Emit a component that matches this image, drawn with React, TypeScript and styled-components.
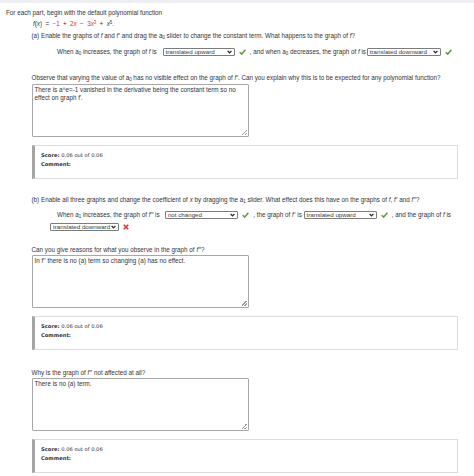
import React from 'react';
import styled, { createGlobalStyle } from 'styled-components';

const GlobalStyle = createGlobalStyle`
  html, body {
    margin: 0;
    padding: 0;
    background: #fff;
  }
  body {
    font-family: "Liberation Sans", Arial, sans-serif;
    font-size: 6.3px;
    color: #333;
  }
  sub, sup {
    font-size: 70%;
    line-height: 0;
    vertical-align: baseline;
    position: relative;
  }
  sub { top: 0.3em; }
  sup { top: -0.45em; }
`;

const TopBar = styled.div`
  height: 3px;
  background: #eceef1;
`;

const Page = styled.div`
  padding: 1px 0 0 6px;
`;

const Intro = styled.p`
  margin: 5px 0 0;
  line-height: 8px;
  white-space: nowrap;
`;

const Part = styled.section`
  margin-left: 25.5px;
`;

const Formula = styled.p`
  margin: 3px 0 0 1.5px;
  line-height: 8px;
  white-space: nowrap;
  word-spacing: 1.6px;
`;

const Coef = styled.span`
  color: #d9302c;
`;

const Question = styled.p<{ $top: number }>`
  margin: ${(p) => p.$top}px 0 0;
  line-height: 8px;
  white-space: nowrap;
`;

const AnswerRow = styled.div<{ $top: number }>`
  margin: ${(p) => p.$top}px 0 0 18.5px;
  width: 412px;
  line-height: 12px;
  text-indent: 7px;
  white-space: nowrap;
`;

const Select = styled.span<{ $w: number; $ml: number }>`
  display: inline-flex;
  align-items: center;
  justify-content: space-between;
  box-sizing: border-box;
  width: ${(p) => p.$w}px;
  height: 8px;
  margin-left: ${(p) => p.$ml}px;
  padding: 0 2px 0 2px;
  border: 1px solid #7d7d7d;
  border-radius: 1px;
  font-size: 6.2px;
  line-height: 6px;
  text-indent: 0;
  vertical-align: middle;
  color: #3a3a3a;
  overflow: hidden;
`;

const Mark = styled.svg`
  vertical-align: middle;
  margin: 0 2.5px 0 4px;
`;

const Answer = styled.textarea<{ $top: number }>`
  display: block;
  box-sizing: border-box;
  width: 217px;
  height: 53px;
  margin-top: ${(p) => p.$top}px;
  padding: 1px 2px;
  border: 1px solid #a8a8a8;
  border-radius: 1px;
  font: 6.3px/8px "Liberation Sans", Arial, sans-serif;
  color: #333;
  resize: none;
  outline: none;
  background: linear-gradient(
      135deg,
      transparent 40%,
      #9a9a9a 40%,
      #9a9a9a 52%,
      transparent 52%,
      transparent 70%,
      #9a9a9a 70%,
      #9a9a9a 82%,
      transparent 82%
    )
    no-repeat right 1px bottom 1px / 5px 5px;
`;

const ScoreBox = styled.div`
  box-sizing: border-box;
  width: 426px;
  height: 34px;
  margin-top: 8px;
  padding: 5px 6.5px;
  border: 1px solid #dcdcdc;
  border-left: 3px solid #a5a5a5;
  font-family: "DejaVu Sans", Verdana, sans-serif;
  font-size: 5.2px;
  line-height: 9px;
  color: #333;
`;

const Label = styled.b`
  font-weight: bold;
`;

const Chevron = () => (
  <svg width="5" height="4" viewBox="0 0 5 4">
    <path d="M0.6 0.9 L2.5 2.9 L4.4 0.9" fill="none" stroke="#222" strokeWidth="1.3" />
  </svg>
);

const Check = () => (
  <Mark width="7" height="6" viewBox="0 0 7 6">
    <path d="M0.7 3.2 L2.7 5.1 L6.4 0.8" fill="none" stroke="#5a9e3a" strokeWidth="1.5" />
  </Mark>
);

const Cross = () => (
  <Mark width="6" height="6" viewBox="0 0 6 6">
    <path d="M0.8 0.8 L5.2 5.2 M5.2 0.8 L0.8 5.2" fill="none" stroke="#e0332f" strokeWidth="1.6" />
  </Mark>
);

const Dropdown: React.FC<{ w: number; value: string; ml?: number }> = ({ w, value, ml = 0 }) => (
  <Select $w={w} $ml={ml}>
    <span>{value}</span>
    <Chevron />
  </Select>
);

const Score = () => (
  <ScoreBox>
    <div>
      <Label>Score:</Label> 0.06 out of 0.06
    </div>
    <div>
      <Label>Comment:</Label>
    </div>
  </ScoreBox>
);

const f = <i>f</i>;
const fp = (
  <>
    <i>f</i>&#8202;′
  </>
);
const fpp = (
  <>
    <i>f</i>&#8202;′′
  </>
);

export default function App() {
  return (
    <>
      <GlobalStyle />
      <TopBar />
      <Page>
        <Intro>For each part, begin with the default polynomial function</Intro>
        <Part>
          <Formula>
            <i>f</i>(<i>x</i>) = <Coef>−1</Coef> + <Coef>2<i>x</i></Coef> − <Coef>3<i>x</i><sup>3</sup></Coef> +{' '}
            <i>x</i>
            <sup>5</sup>.
          </Formula>
          <Question $top={4}>
            (a) Enable the graphs of {f} and {fp} and drag the a<sub>0</sub> slider to change the constant
            term. What happens to the graph of {f}?
          </Question>
          <AnswerRow $top={6}>
            When a<sub>0</sub> increases, the graph of {f} is <Dropdown w={72} ml={4} value="translated upward" />
            <Check /> , and when a<sub>0</sub> decreases, the graph of {f} is{' '}
            <Dropdown w={74} ml={-1} value="translated downward" />
            <Check />
          </AnswerRow>
          <Question $top={15.5}>
            Observe that varying the value of a<sub>0</sub> has no visible effect on the graph of {fp}. Can
            you explain why this is to be expected for any polynomial function?
          </Question>
          <Answer
            $top={2.5}
            readOnly
            defaultValue="There is a^e=-1 vanished in the derivative being the constant term so no effect on graph f'."
          />
          <Score />

          <Question $top={17}>
            (b) Enable all three graphs and change the coefficient of <i>x</i> by dragging the a<sub>1</sub>{' '}
            slider. What effect does this have on the graphs of {f}, {fp} and {fpp}?
          </Question>
          <AnswerRow $top={5}>
            When a<sub>1</sub> increases, the graph of {fpp} is <Dropdown w={73} ml={3.5} value="not changed" />
            <Check /> , the graph of {fp} is <Dropdown w={73} ml={0} value="translated upward" />
            <Check /> , and the graph of {f} is
            <br />
            <Dropdown w={69} value="translated downward" />
            <Cross />
          </AnswerRow>
          <Question $top={13}>Can you give reasons for what you observe in the graph of {fpp}?</Question>
          <Answer
            $top={1}
            readOnly
            defaultValue="In f'' there is no (a) term so changing (a) has no effect."
          />
          <Score />

          <Question $top={19}>Why is the graph of {fpp} not affected at all?</Question>
          <Answer $top={1} readOnly defaultValue="There is no (a) term." />
          <Score />
        </Part>
      </Page>
    </>
  );
}
